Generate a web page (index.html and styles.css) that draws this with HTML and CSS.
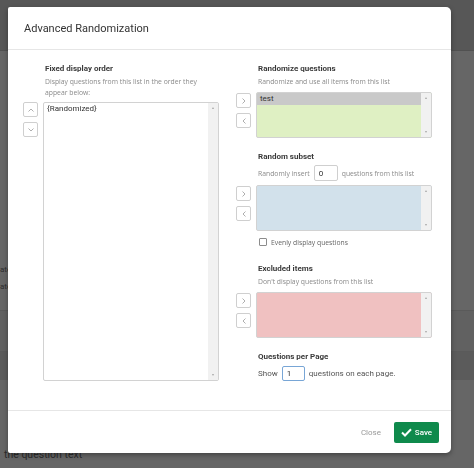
FILE: index.html
```html
<!DOCTYPE html>
<html>
<head>
  <title>Advanced Randomization</title>
  <meta charset="UTF-8">
  <link rel="stylesheet" href="styles.css">
</head>
<body>

  <!-- Survey page behind the dialog -->
  <div class="page">
    <div class="page-bar"></div>
    <div class="page-section">
      <div class="page-label">ate</div>
      <div class="page-label">ate</div>
    </div>
    <div class="page-band"></div>
    <div class="page-band dark"></div>
    <div class="page-rest">
      <div class="page-text">the question text</div>
    </div>
  </div>

  <!-- Dialog -->
  <div class="modal">
    <div class="modal-header">
      <h2>Advanced Randomization</h2>
    </div>

    <div class="modal-body">
      <div class="column">
        <div class="block-title">Fixed display order</div>
        <div class="block-desc">Display questions from this list in the order they appear below:</div>
        <div class="block-row">
          <div class="move-buttons">
            <button class="move-btn"><svg width="6" height="4" viewBox="0 0 6 4"><polyline points="0.5,3.5 3,1 5.5,3.5" /></svg></button>
            <button class="move-btn"><svg width="6" height="4" viewBox="0 0 6 4"><polyline points="0.5,0.5 3,3 5.5,0.5" /></svg></button>
          </div>
          <div class="list list-fixed">
            <div class="list-items">
              <div class="list-item">{Randomized}</div>
            </div>
            <div class="scrollbar"><span class="arrow-up"></span><span class="arrow-down"></span></div>
          </div>
        </div>
      </div>

      <div class="column right">
        <!-- Randomize questions -->
        <div class="block-title">Randomize questions</div>
        <div class="block-desc">Randomize and use all items from this list</div>
        <div class="block-row">
          <div class="move-buttons side">
            <button class="move-btn"><svg width="4" height="6" viewBox="0 0 4 6"><polyline points="0.5,0.5 3,3 0.5,5.5" /></svg></button>
            <button class="move-btn"><svg width="4" height="6" viewBox="0 0 4 6"><polyline points="3.5,0.5 1,3 3.5,5.5" /></svg></button>
          </div>
          <div class="list list-green">
            <div class="list-items">
              <div class="list-item selected">test</div>
            </div>
            <div class="scrollbar"><span class="arrow-up"></span><span class="arrow-down"></span></div>
          </div>
        </div>

        <!-- Random subset -->
        <div class="block-title spaced">Random subset</div>
        <div class="inline-line">
          Randomly insert <span class="num-input">0</span> questions from this list
        </div>
        <div class="block-row">
          <div class="move-buttons side">
            <button class="move-btn"><svg width="4" height="6" viewBox="0 0 4 6"><polyline points="0.5,0.5 3,3 0.5,5.5" /></svg></button>
            <button class="move-btn"><svg width="4" height="6" viewBox="0 0 4 6"><polyline points="3.5,0.5 1,3 3.5,5.5" /></svg></button>
          </div>
          <div class="list list-blue">
            <div class="list-items"></div>
            <div class="scrollbar"><span class="arrow-up"></span><span class="arrow-down"></span></div>
          </div>
        </div>
        <label class="check-line"><span class="checkbox"></span>Evenly display questions</label>

        <!-- Excluded items -->
        <div class="block-title spaced-lg">Excluded items</div>
        <div class="block-desc">Don't display questions from this list</div>
        <div class="block-row">
          <div class="move-buttons side">
            <button class="move-btn"><svg width="4" height="6" viewBox="0 0 4 6"><polyline points="0.5,0.5 3,3 0.5,5.5" /></svg></button>
            <button class="move-btn"><svg width="4" height="6" viewBox="0 0 4 6"><polyline points="3.5,0.5 1,3 3.5,5.5" /></svg></button>
          </div>
          <div class="list list-red">
            <div class="list-items"></div>
            <div class="scrollbar"><span class="arrow-up"></span><span class="arrow-down"></span></div>
          </div>
        </div>

        <!-- Questions per page -->
        <div class="block-title spaced">Questions per Page</div>
        <div class="inline-line dark">
          Show <span class="num-input focus">1</span> questions on each page.
        </div>
      </div>
    </div>

    <div class="modal-footer">
      <button class="btn-close">Close</button>
      <button class="btn-save">
        <svg width="11" height="9" viewBox="0 0 11 9"><polyline points="1,4.5 4,7.5 10,1.2" /></svg>
        Save
      </button>
    </div>
  </div>

</body>
</html>
```

FILE: styles.css
```css
html, body {
  height: 100%;
  margin: 0;
}

body {
  font-family: Roboto, "Liberation Sans", sans-serif;
  background-color: #636363;
  overflow: hidden;
}

/* Page behind the dialog */
.page {
  height: 100%;
  display: flex;
  flex-direction: column;
}

.page-bar {
  height: 50px;
  background-color: #575757;
  border-bottom: 1px solid #515151;
}

.page-section {
  height: 259px;
  background-color: #666;
  padding-top: 210px;
  box-sizing: border-box;
}

.page-label {
  font-size: 8px;
  line-height: 17px;
  color: #2e2e2e;
  padding-left: 0;
}

.page-band {
  height: 40px;
  background-color: #616161;
  border-top: 1px solid #5a5a5a;
}

.page-band.dark {
  height: 28px;
  background-color: #5b5b5b;
}

.page-rest {
  flex: 1;
  background-color: #666;
  padding-top: 68px;
}

.page-text {
  font-size: 10.5px;
  color: #2b2b2b;
  padding-left: 4px;
}

/* Dialog */
.modal {
  position: fixed;
  top: 7px;
  left: 8px;
  width: 443px;
  height: 446px;
  background-color: #fff;
  border-radius: 2px 5px 5px 2px;
  box-shadow: 0 2px 5px rgba(0, 0, 0, 0.35);
  display: flex;
  flex-direction: column;
}

.modal-header {
  height: 43px;
  box-sizing: border-box;
  border-bottom: 1px solid #e6e6e6;
  display: flex;
  align-items: center;
  padding-left: 16px;
}

.modal-header h2 {
  margin: 0;
  font-size: 11px;
  font-weight: 400;
  color: #333;
}

.modal-body {
  flex: 1;
  display: flex;
  gap: 17px;
  padding: 13px 19px 0 15px;
}

.column {
  width: 196px;
}

.block-title {
  font-size: 8px;
  font-weight: 700;
  line-height: 12px;
  color: #3a3a3a;
  padding-left: 22px;
}

.block-title.spaced {
  margin-top: 13px;
}

.block-title.spaced-lg {
  margin-top: 15px;
}

.block-desc {
  font-family: "Open Sans", Roboto, sans-serif;
  font-size: 6.8px;
  line-height: 11px;
  color: #8a8a8a;
  margin-top: 1px;
  padding-left: 22px;
}

.inline-line {
  display: flex;
  align-items: center;
  gap: 4px;
  height: 16px;
  margin-top: 2px;
  padding-left: 22px;
  font-family: "Open Sans", Roboto, sans-serif;
  font-size: 6.8px;
  color: #8a8a8a;
}

.inline-line.dark {
  font-family: Roboto, sans-serif;
  font-size: 8px;
  color: #555;
}

.num-input {
  width: 24px;
  height: 16px;
  box-sizing: border-box;
  border: 1px solid #cfcfcf;
  border-radius: 2px;
  padding-left: 4px;
  display: flex;
  align-items: center;
  font-family: Roboto, sans-serif;
  font-size: 8px;
  color: #333;
}

.num-input.focus {
  width: 23px;
  height: 15px;
  border-color: #78a6d6;
}

.block-row {
  display: flex;
  gap: 5px;
  margin-top: 4px;
}

.column.right .block-desc + .block-row {
  margin-top: 5px;
}

.move-buttons {
  width: 15px;
  display: flex;
  flex-direction: column;
  gap: 5px;
}

.move-buttons.side {
  padding-top: 1px;
}

.move-btn {
  width: 15px;
  height: 15px;
  padding: 0;
  border: 1px solid #cfcfcf;
  border-radius: 2px;
  background-color: #fff;
  display: flex;
  align-items: center;
  justify-content: center;
}

.move-btn svg polyline {
  fill: none;
  stroke: #9a9a9a;
  stroke-width: 0.8;
}

/* Lists */
.list {
  width: 176px;
  height: 46px;
  box-sizing: border-box;
  border: 1px solid #d2d2d2;
  border-radius: 2px;
  display: flex;
  overflow: hidden;
}

.list-fixed {
  height: 279px;
  background-color: #fff;
}

.list-green {
  background-color: #dff0c3;
}

.list-blue {
  background-color: #d2e1eb;
}

.list-red {
  background-color: #f0c1c1;
}

.list-items {
  flex: 1;
}

.list-item {
  font-size: 8px;
  line-height: 12px;
  color: #333;
  padding-left: 3px;
}

.list-item.selected {
  background-color: #c9c9c9;
}

.scrollbar {
  width: 10px;
  background-color: #f1f1f1;
  display: flex;
  flex-direction: column;
  justify-content: space-between;
  align-items: center;
  padding: 4px 0;
}

.arrow-up,
.arrow-down {
  width: 0;
  height: 0;
  border-left: 1.5px solid transparent;
  border-right: 1.5px solid transparent;
}

.arrow-up {
  border-bottom: 2px solid #a5a5a5;
}

.arrow-down {
  border-top: 2px solid #a5a5a5;
}

.check-line {
  display: flex;
  align-items: center;
  gap: 4px;
  height: 12px;
  margin-top: 5px;
  padding-left: 23px;
  font-family: "Open Sans", Roboto, sans-serif;
  font-size: 6.8px;
  color: #666;
}

.checkbox {
  width: 8px;
  height: 8px;
  box-sizing: border-box;
  border: 1px solid #8c8c8c;
  border-radius: 1px;
}

/* Footer */
.modal-footer {
  height: 43px;
  box-sizing: border-box;
  border-top: 1px solid #e6e6e6;
  display: flex;
  align-items: center;
  justify-content: flex-end;
  gap: 13px;
  padding-right: 12px;
}

.btn-close {
  border: none;
  background: none;
  padding: 0;
  font-family: inherit;
  font-size: 8px;
  color: #999;
}

.btn-save {
  width: 45px;
  height: 21px;
  border: none;
  border-radius: 2px;
  background-color: #0f8a4c;
  color: #fff;
  font-family: inherit;
  font-size: 8px;
  font-weight: 500;
  display: flex;
  align-items: center;
  justify-content: center;
  gap: 3px;
  padding: 0;
}

.btn-save svg polyline {
  fill: none;
  stroke: #fff;
  stroke-width: 2;
}
```
